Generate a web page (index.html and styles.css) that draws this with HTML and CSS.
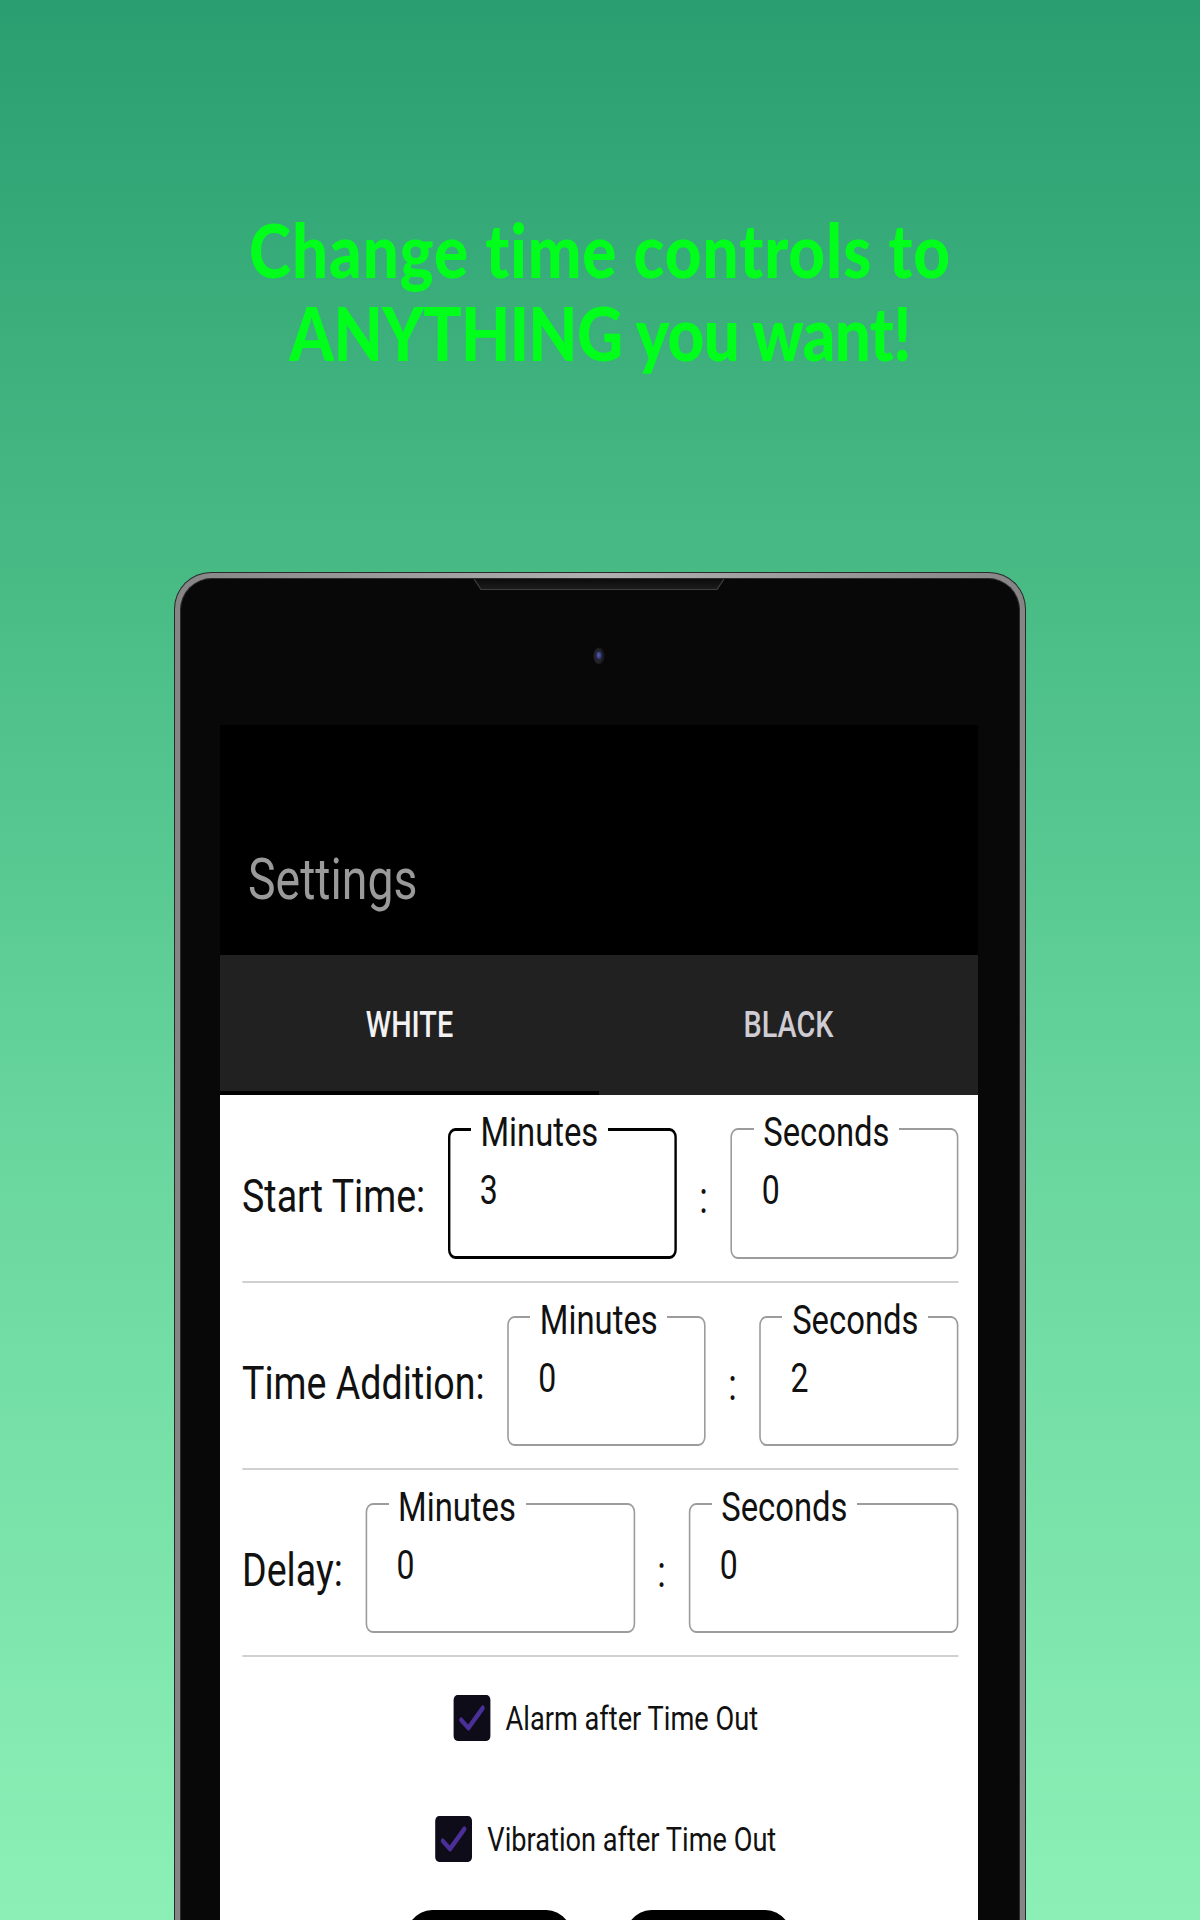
FILE: index.html
```html
<!DOCTYPE html>
<html lang="en">
<head>
<meta charset="utf-8">
<title>Chess Clock – Settings</title>
<link rel="stylesheet" href="styles.css">
</head>
<body>
<main class="promo">
  <h1 class="headline">
    <span class="headline-line headline-top">Change time controls to</span>
    <span class="headline-line headline-bottom">ANYTHING you want!</span>
  </h1>

  <div class="tablet">
    <div class="bezel">
      <div class="bezel-top">
        <svg class="notch" viewBox="0 0 250 11" aria-hidden="true">
          <defs>
            <linearGradient id="notchFill" x1="0" y1="0" x2="0" y2="1">
              <stop offset="0" stop-color="#0c0c0c"/>
              <stop offset="1" stop-color="#1c1c1c"/>
            </linearGradient>
          </defs>
          <path d="M0 0 H250 L243 10.5 H7 Z" fill="url(#notchFill)"/>
          <path d="M0 0 L7 10.5 H243 L250 0" fill="none" stroke="#3f3f3f" stroke-width="1.2"/>
        </svg>
        <svg class="camera" viewBox="0 0 12 18" aria-hidden="true">
          <defs>
            <radialGradient id="lens" cx="0.45" cy="0.45" r="0.6">
              <stop offset="0" stop-color="#5563b8"/>
              <stop offset="1" stop-color="#26285a"/>
            </radialGradient>
          </defs>
          <ellipse cx="6" cy="9" rx="5.5" ry="8.5" fill="#18181d"/>
          <ellipse cx="5" cy="9" rx="4.5" ry="7.5" fill="#2a2a30" opacity="0.6"/>
          <ellipse cx="6" cy="8.5" rx="2.8" ry="4" fill="url(#lens)"/>
        </svg>
      </div>

      <div class="screen">
        <div class="screen-inner">
          <header class="action-bar">
            <span class="title">Settings</span>
          </header>

          <nav class="tabs">
            <div class="tab tab-active">WHITE</div>
            <div class="tab">BLACK</div>
          </nav>

          <section class="settings">
            <div class="setting-row">
              <div class="row-label">Start Time:</div>
              <fieldset class="field field-focused">
                <legend>Minutes</legend>
                <div class="field-value">3</div>
              </fieldset>
              <div class="colon">:</div>
              <fieldset class="field">
                <legend>Seconds</legend>
                <div class="field-value">0</div>
              </fieldset>
            </div>

            <div class="setting-row">
              <div class="row-label">Time Addition:</div>
              <fieldset class="field">
                <legend>Minutes</legend>
                <div class="field-value">0</div>
              </fieldset>
              <div class="colon">:</div>
              <fieldset class="field">
                <legend>Seconds</legend>
                <div class="field-value">2</div>
              </fieldset>
            </div>

            <div class="setting-row">
              <div class="row-label">Delay:</div>
              <fieldset class="field">
                <legend>Minutes</legend>
                <div class="field-value">0</div>
              </fieldset>
              <div class="colon">:</div>
              <fieldset class="field">
                <legend>Seconds</legend>
                <div class="field-value">0</div>
              </fieldset>
            </div>
          </section>

          <section class="options">
            <label class="check">
              <span class="check-box">
                <svg viewBox="0 0 46 46" aria-hidden="true"><path d="M9.5 25 L18.5 33 L36.5 13" fill="none" stroke="#4a2f98" stroke-width="5" stroke-linecap="round" stroke-linejoin="round"/></svg>
              </span>
              <span class="check-text">Alarm after Time Out</span>
            </label>
            <label class="check">
              <span class="check-box">
                <svg viewBox="0 0 46 46" aria-hidden="true"><path d="M9.5 25 L18.5 33 L36.5 13" fill="none" stroke="#4a2f98" stroke-width="5" stroke-linecap="round" stroke-linejoin="round"/></svg>
              </span>
              <span class="check-text">Vibration after Time Out</span>
            </label>
          </section>

          <div class="buttons">
            <span class="btn"></span>
            <span class="btn"></span>
          </div>
        </div>
      </div>
    </div>
  </div>
</main>
</body>
</html>
```

FILE: styles.css
```css
* {
  box-sizing: border-box;
}

html,
body {
  margin: 0;
  height: 1920px;
  overflow: hidden;
}

body {
  font-family: Roboto, "Noto Sans", sans-serif;
}

/* page backdrop */
.promo {
  height: 1920px;
  padding-top: 208px;
  background: linear-gradient(180deg, #2b9e71 0%, #48bb85 30%, #6bd8a0 62%, #8cf0b6 100%);
  overflow: hidden;
}

.headline {
  margin: 0;
  font-family: Lato, "Liberation Sans", sans-serif;
  font-weight: 900;
  font-size: 75px;
  line-height: 83px;
  color: #00ff1a;
  text-align: center;
  transform: scaleX(0.85);
}

.headline-line {
  display: block;
}

.headline-top {
  letter-spacing: 1.1px;
}

.headline-bottom {
  letter-spacing: -0.8px;
}

/* device frame */
.tablet {
  width: 852px;
  height: 1400px;
  margin: 198px auto 0;
  padding: 5px 5px 0;
  border: 1px solid #2a2a2a;
  border-bottom: 0;
  border-radius: 37px 37px 0 0;
  background: linear-gradient(90deg, #858585, #b0b0b0 50%, #858585);
}

.bezel {
  height: 100%;
  display: flex;
  flex-direction: column;
  padding: 0 41px 0 39px;
  background: #080808;
  border: 1px solid #2c2c2c;
  border-bottom: 0;
  border-radius: 32px 32px 0 0;
}

.bezel-top {
  flex: none;
  height: 146px;
  display: flex;
  flex-direction: column;
  align-items: center;
}

.notch {
  display: block;
  width: 250px;
  height: 11px;
}

.camera {
  display: block;
  width: 12px;
  height: 18px;
  margin-top: 57px;
}

/* app screen */
.screen {
  flex: 1;
  overflow: hidden;
  background: #fff;
}

.screen-inner {
  width: 947.5px;
  transform: scaleX(0.8);
  transform-origin: 0 0;
}

.action-bar {
  height: 230px;
  display: flex;
  align-items: flex-end;
  padding: 0 0 46px 35px;
  background: #000;
}

.title {
  font-size: 58px;
  line-height: 60px;
  color: #9a9a9a;
}

.tabs {
  height: 140px;
  display: flex;
  background: #212121;
}

.tab {
  flex: 1;
  display: flex;
  align-items: center;
  justify-content: center;
  font-size: 36px;
  font-weight: 500;
  color: #d0ccd4;
}

.tab-active {
  color: #f2f2f2;
  box-shadow: inset 0 -4px 0 #000;
}

.settings {
  padding: 0 25px 0 27.5px;
}

.setting-row {
  display: flex;
  padding: 10px 0 22px;
  border-bottom: 2px solid #d0d0d0;
}

.row-label {
  flex: none;
  display: flex;
  align-items: center;
  padding-top: 26.5px;
  margin-right: 28px;
  font-size: 47px;
  color: #111;
  white-space: nowrap;
}

.colon {
  flex: none;
  width: 67px;
  display: flex;
  align-items: center;
  justify-content: center;
  padding-top: 31px;
  font-size: 44px;
  color: #111;
}

.field {
  flex: 1;
  min-width: 0;
  margin: 0;
  padding: 0;
  border: 2px solid #9c9c9c;
  border-radius: 9px;
}

.field-focused {
  border: 3px solid #000;
}

.field legend {
  margin-left: 27px;
  padding: 7px 12px 0;
  font-size: 41px;
  line-height: 41px;
  color: #111;
}

.field-focused legend {
  margin-left: 26px;
}

.field-value {
  height: 40px;
  margin: 18px 0 45px 37px;
  font-size: 40px;
  line-height: 40px;
  color: #111;
}

/* alert options */
.options {
  display: flex;
  flex-direction: column;
  align-items: center;
  gap: 75px;
  padding-top: 38px;
}

.check {
  display: flex;
  align-items: center;
  gap: 19px;
  padding-left: 17px;
}

.check-box {
  display: block;
  width: 46px;
  height: 46px;
  border-radius: 5px;
  background: #0f0c1a;
}

.check-box svg {
  display: block;
  width: 46px;
  height: 46px;
}

.check-text {
  font-size: 34px;
  line-height: 46px;
  color: #111;
}

.buttons {
  display: flex;
  justify-content: center;
  gap: 59px;
  margin-top: 48px;
}

.btn {
  display: block;
  width: 215px;
  height: 90px;
  border-radius: 36px;
  background: #000;
}
```
